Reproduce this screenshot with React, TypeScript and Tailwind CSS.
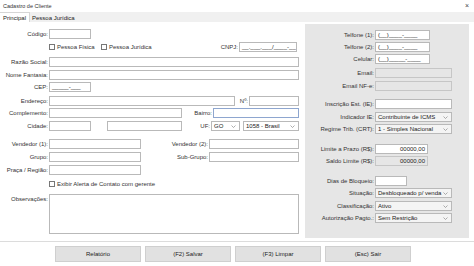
const font = { fontFamily: '"Liberation Sans", Arial, sans-serif' };

function Box({ w, children, className = "" }: { w: string; children?: React.ReactNode; className?: string }) {
  return (
    <div className={`${w} h-[10px] border border-[#b9b9b9] bg-white flex items-center px-[2px] text-[6px] leading-none text-[#222] overflow-hidden whitespace-nowrap ${className}`}>
      {children}
    </div>
  );
}

function Select({ w, value, className = "bg-white" }: { w: string; value: string; className?: string }) {
  return (
    <div className={`${w} h-[10px] border border-[#b9b9b9] flex items-center justify-between pl-[2px] pr-[3px] text-[6px] leading-none text-[#222] whitespace-nowrap ${className}`}>
      <span>{value}</span>
      <svg width="5" height="3" viewBox="0 0 5 3">
        <polyline points="0.5,0.5 2.5,2.5 4.5,0.5" fill="none" stroke="#8a8a8a" strokeWidth="0.7" />
      </svg>
    </div>
  );
}

function Label({ w, text }: { w: string; text: string }) {
  return <div className={`${w} shrink-0 flex justify-end pr-[1px] text-[6px] leading-none text-[#333] whitespace-nowrap`}>{text}</div>;
}

function Check({ text }: { text: string }) {
  return (
    <div className="flex items-center gap-[2px] text-[6px] leading-none text-[#333] whitespace-nowrap">
      <div className="w-[6px] h-[6px] border border-[#777] bg-white" />
      <span>{text}</span>
    </div>
  );
}

function Row({ mt, children }: { mt: string; children: React.ReactNode }) {
  return <div className={`flex items-center h-[10px] ${mt}`}>{children}</div>;
}

export default function App() {
  return (
    <div className="w-[474px] h-[266px] bg-white flex flex-col overflow-hidden" style={font}>
      <div className="h-[12px] flex items-center justify-between pl-[3px] pr-[5px] text-[5.5px] text-[#333]">
        <span>Cadastro de Cliente</span>
        <span className="text-[7px] text-[#444]">×</span>
      </div>
      <div className="h-[10px] bg-[#f0f0f0] flex items-end text-[6px] leading-none text-[#222]">
        <div className="h-[10px] px-[3px] bg-white border-t border-r border-[#d6d6d6] flex items-center">Principal</div>
        <div className="h-[9px] px-[2px] flex items-center">Pessoa Jurídica</div>
      </div>
      <div className="h-[220px] flex border-b border-[#dcdcdc]">
        <div className="w-[305px] flex flex-col pt-[7px]">
          <Row mt="">
            <Label w="w-[49px]" text="Código:" />
            <Box w="w-[42px]" />
          </Row>
          <Row mt="mt-[3px]">
            <div className="w-[49px]" />
            <div className="w-[52px]"><Check text="Pessoa Física" /></div>
            <div className="w-[121px]"><Check text="Pessoa Jurídica" /></div>
            <Label w="w-[17px]" text="CNPJ:" />
            <Box w="w-[58px]">__.___.___/____-__</Box>
          </Row>
          <Row mt="mt-[5px]">
            <Label w="w-[49px]" text="Razão Social:" />
            <Box w="w-[250px]" />
          </Row>
          <Row mt="mt-[3px]">
            <Label w="w-[49px]" text="Nome Fantasia:" />
            <Box w="w-[250px]" />
          </Row>
          <Row mt="mt-[2px]">
            <Label w="w-[49px]" text="CEP:" />
            <Box w="w-[42px]">_____-___</Box>
          </Row>
          <Row mt="mt-[4px]">
            <Label w="w-[49px]" text="Endereço:" />
            <Box w="w-[186px]" />
            <Label w="w-[14px]" text="Nº:" />
            <Box w="w-[50px]" />
          </Row>
          <Row mt="mt-[2px]">
            <Label w="w-[49px]" text="Complemento:" />
            <Box w="w-[133px]" />
            <Label w="w-[31px]" text="Bairro:" />
            <Box w="w-[86px]" className="!border-[#8ea6cf]" />
          </Row>
          <Row mt="mt-[3px]">
            <Label w="w-[49px]" text="Cidade:" />
            <Box w="w-[42px]" />
            <div className="w-[16px]" />
            <Box w="w-[75px]" />
            <Label w="w-[29px]" text="UF:" />
            <Select w="w-[29px]" value="GO" />
            <div className="w-[3px]" />
            <Select w="w-[56px]" value="1058 - Brasil" />
          </Row>
          <Row mt="mt-[8px]">
            <Label w="w-[49px]" text="Vendedor (1):" />
            <Box w="w-[92px]" />
            <Label w="w-[68px]" text="Vendedor (2):" />
            <Box w="w-[90px]" />
          </Row>
          <Row mt="mt-[3px]">
            <Label w="w-[49px]" text="Grupo:" />
            <Box w="w-[92px]" />
            <Label w="w-[68px]" text="Sub-Grupo:" />
            <Box w="w-[90px]" />
          </Row>
          <Row mt="mt-[3px]">
            <Label w="w-[49px]" text="Praça / Região:" />
            <Box w="w-[92px]" />
          </Row>
          <Row mt="mt-[4px]">
            <div className="w-[49px]" />
            <Check text="Exibir Alerta de Contato com gerente" />
          </Row>
          <div className="flex mt-[5px]">
            <div className="w-[49px] flex justify-end pr-[1px] pt-[2px] text-[6px] leading-none text-[#333]">Observações:</div>
            <div className="w-[250px] h-[40px] border border-[#b9b9b9] bg-white" />
          </div>
        </div>
        <div className="w-[164px] h-[214px] mt-[2px] bg-[#e6e6e6] flex flex-col pt-[6px]">
          <Row mt="">
            <Label w="w-[70px]" text="Telfone (1):" />
            <Box w="w-[55px]">(__)____-____</Box>
          </Row>
          <Row mt="mt-[2px]">
            <Label w="w-[70px]" text="Telfone (2):" />
            <Box w="w-[55px]">(__)____-____</Box>
          </Row>
          <Row mt="mt-[2px]">
            <Label w="w-[70px]" text="Celular:" />
            <Box w="w-[55px]">(__)_____-____</Box>
          </Row>
          <Row mt="mt-[4px]">
            <Label w="w-[70px]" text="Email:" />
            <Box w="w-[77px]" className="!bg-[#e6e6e6] !border-[#c6c6c6]" />
          </Row>
          <Row mt="mt-[3px]">
            <Label w="w-[70px]" text="Email NF-e:" />
            <Box w="w-[77px]" className="!bg-[#e6e6e6] !border-[#c6c6c6]" />
          </Row>
          <Row mt="mt-[8px]">
            <Label w="w-[70px]" text="Inscrição Est. (IE):" />
            <Box w="w-[77px]" />
          </Row>
          <Row mt="mt-[3px]">
            <Label w="w-[70px]" text="Indicador IE:" />
            <Select w="w-[77px]" value="Contribuinte de ICMS" className="bg-[#f4f4f4]" />
          </Row>
          <Row mt="mt-[2px]">
            <Label w="w-[70px]" text="Regime Trib. (CRT):" />
            <Select w="w-[77px]" value="1 - Simples Nacional" className="bg-[#f4f4f4]" />
          </Row>
          <Row mt="mt-[10px]">
            <Label w="w-[70px]" text="Limite a Prazo (R$):" />
            <Box w="w-[53px]" className="justify-end">00000,00</Box>
          </Row>
          <Row mt="mt-[2px]">
            <Label w="w-[70px]" text="Saldo Limite (R$):" />
            <Box w="w-[53px]" className="justify-end !bg-[#e6e6e6] !border-[#c6c6c6]">00000,00</Box>
          </Row>
          <Row mt="mt-[10px]">
            <Label w="w-[70px]" text="Dias de Bloqueio:" />
            <Box w="w-[32px]" />
          </Row>
          <Row mt="mt-[2px]">
            <Label w="w-[70px]" text="Situação:" />
            <Select w="w-[77px]" value="Desbloqueado p/ venda" className="bg-[#f4f4f4]" />
          </Row>
          <Row mt="mt-[3px]">
            <Label w="w-[70px]" text="Classificação:" />
            <Select w="w-[77px]" value="Ativo" className="bg-[#f4f4f4]" />
          </Row>
          <Row mt="mt-[2px]">
            <Label w="w-[70px]" text="Autorização Pagto.:" />
            <Select w="w-[77px]" value="Sem Restrição" className="bg-[#f4f4f4]" />
          </Row>
        </div>
      </div>
      <div className="flex gap-[4px] pl-[55px] mt-[4px]">
        {["Relatório", "(F2) Salvar", "(F3) Limpar", "(Esc) Sair"].map((b) => (
          <div key={b} className="w-[86px] h-[16px] bg-[#e1e1e1] border border-[#cfcfcf] flex items-center justify-center text-[6px] leading-none text-[#222]">
            {b}
          </div>
        ))}
      </div>
    </div>
  );
}
